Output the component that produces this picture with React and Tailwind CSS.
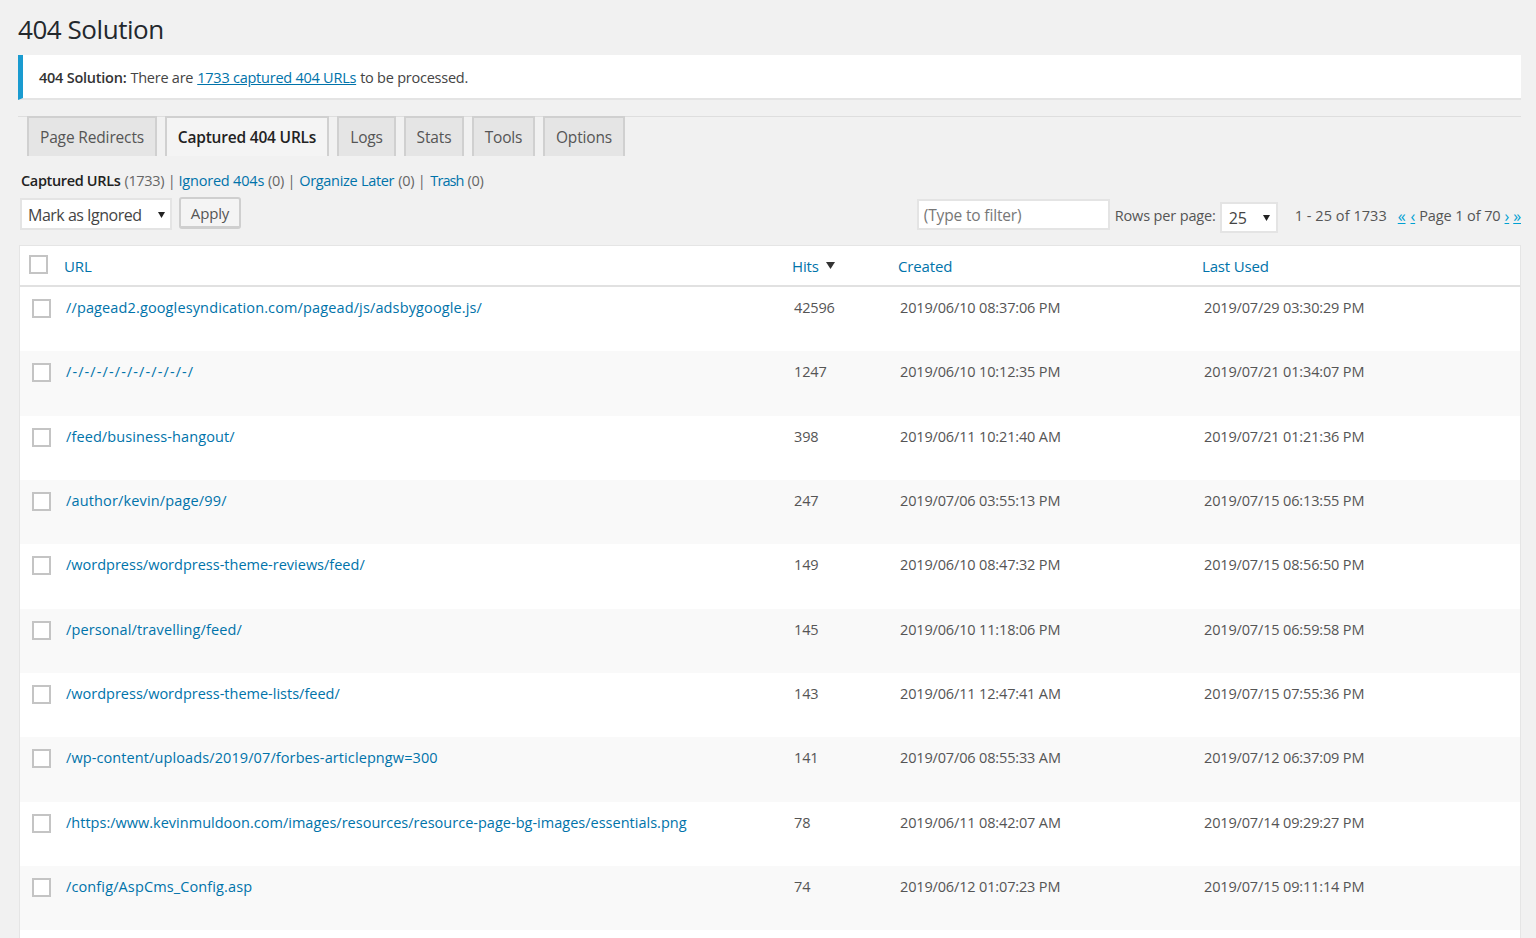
const tabs = [
  { label: "Page Redirects", width: "w-[130px]" },
  { label: "Captured 404 URLs", width: "w-[164px]" },
  { label: "Logs", width: "w-[59px]" },
  { label: "Stats", width: "w-[60px]" },
  { label: "Tools", width: "w-[63px]" },
  { label: "Options", width: "w-[82px]" },
];

const rows = [
  ["//pagead2.googlesyndication.com/pagead/js/adsbygoogle.js/", "42596", "2019/06/10 08:37:06 PM", "2019/07/29 03:30:29 PM", "tracking-[0.13px]"],
  ["/-/-/-/-/-/-/-/-/-/-/", "1247", "2019/06/10 10:12:35 PM", "2019/07/21 01:34:07 PM", "tracking-[1.1px]"],
  ["/feed/business-hangout/", "398", "2019/06/11 10:21:40 AM", "2019/07/21 01:21:36 PM", "tracking-[0.1px]"],
  ["/author/kevin/page/99/", "247", "2019/07/06 03:55:13 PM", "2019/07/15 06:13:55 PM", "tracking-[0.15px]"],
  ["/wordpress/wordpress-theme-reviews/feed/", "149", "2019/06/10 08:47:32 PM", "2019/07/15 08:56:50 PM", "tracking-[0px]"],
  ["/personal/travelling/feed/", "145", "2019/06/10 11:18:06 PM", "2019/07/15 06:59:58 PM", "tracking-[0.12px]"],
  ["/wordpress/wordpress-theme-lists/feed/", "143", "2019/06/11 12:47:41 AM", "2019/07/15 07:55:36 PM", "tracking-[0px]"],
  ["/wp-content/uploads/2019/07/forbes-articlepngw=300", "141", "2019/07/06 08:55:33 AM", "2019/07/12 06:37:09 PM", "tracking-[0.1px]"],
  ["/https:/www.kevinmuldoon.com/images/resources/resource-page-bg-images/essentials.png", "78", "2019/06/11 08:42:07 AM", "2019/07/14 09:29:27 PM", "tracking-[0.01px]"],
  ["/config/AspCms_Config.asp", "74", "2019/06/12 01:07:23 PM", "2019/07/15 09:11:14 PM", "tracking-[0.12px]"],
];

const gridCols = "grid grid-cols-[44px_728px_106px_304px_1fr]";

function Checkbox({ className }) {
  return <span className={"block w-[19px] h-[19px] bg-white border-2 border-[#c4c4c4] " + className} />;
}

function Caret() {
  return (
    <svg width="7" height="6" viewBox="0 0 7 6" className="shrink-0">
      <path d="M0 0h7L3.5 6z" fill="#222" />
    </svg>
  );
}

export default function App() {
  return (
    <div className="h-[938px] overflow-hidden bg-[#f1f1f1] pl-[18px] pr-[15px] font-['Open_Sans',sans-serif] text-[14px] tracking-[-0.15px] text-[#555]">
      <h1 className="h-[55px] pt-[10px] text-[26px] leading-[38px] tracking-[-0.45px] text-[#23282d]">404 Solution</h1>

      {/* Notice */}
      <div className="h-[45px] flex items-center bg-white border-l-[5px] border-[#1a9bd0] border-b-2 border-b-[#e4e4e4] pl-[16px] pt-[3px] text-[14.5px] tracking-[-0.24px] text-[#444]">
        <strong className="font-semibold text-[#333]">404 Solution:</strong>
        <span className="ml-1">There are</span>
        <a className="ml-1 text-[#0073aa] underline">1733 captured 404 URLs</a>
        <span className="ml-1">to be processed.</span>
      </div>

      {/* Tabs */}
      <div className="mt-4 h-[40px] flex shadow-[inset_0_1px_0_#dedede] pl-[9px] gap-[8px]">
        {tabs.map((t, i) => (
          <div
            key={t.label}
            className={
              t.width +
              " h-[40px] pt-[1px] flex items-center justify-center border-2 border-b-0 border-[#d0d0d0] text-[15.5px] " +
              (i === 1 ? "bg-[#f4f4f4] font-semibold text-[#222] tracking-[-0.2px]" : "bg-[#e5e5e5] font-medium text-[#555]")
            }
          >
            {t.label}
          </div>
        ))}
      </div>

      {/* Status links */}
      <div className="mt-[15px] ml-[3px] h-[20px] flex items-center text-[14.5px] leading-[20px] tracking-[-0.3px]">
        <strong className="font-semibold text-[#222] tracking-[-0.35px]">Captured URLs</strong>
        <span className="ml-1 text-[#666]">(1733) |</span>
        <a className="ml-[3px] text-[#0073aa] tracking-[-0.2px]">Ignored 404s</a>
        <span className="ml-1 text-[#666]">(0) |</span>
        <a className="ml-[4px] text-[#0073aa]">Organize Later</a>
        <span className="ml-1 text-[#666]">(0) |</span>
        <a className="ml-[5px] text-[#0073aa] tracking-[-0.9px]">Trash</a>
        <span className="ml-1 text-[#666]">(0)</span>
      </div>

      {/* Toolbar */}
      <div className="mt-[6px] ml-[2px] h-[36px] flex items-start">
        <div className="mt-[1px] w-[152px] h-[32px] pt-[2px] bg-white border-2 border-[#e4e4e4] flex items-center justify-between pl-[6px] pr-[5px] text-[16px] tracking-[-0.5px] text-[#444]">
          Mark as Ignored
          <Caret />
        </div>
        <div className="ml-[7px] w-[62px] h-[32px] pt-[2px] bg-[#f4f4f4] border-2 border-[#cfcfcf] border-b-[3px] rounded-[3px] flex items-center justify-center text-[15px] text-[#555]">
          Apply
        </div>
        <div className="ml-auto flex items-start text-[14.5px] leading-[20px] text-[#555]">
          <div className="mt-[2px] w-[193px] h-[31px] bg-white border-2 border-[#e4e4e4] flex items-center pl-[5px] text-[15.5px] text-[#777]">
            (Type to filter)
          </div>
          <span className="mt-[9px] ml-[5px]">Rows per page:</span>
          <div className="mt-[5px] ml-[4px] w-[58px] h-[31px] bg-white border-2 border-[#e4e4e4] flex items-center justify-between pl-[7px] pr-[6px] text-[16px] text-[#444]">
            25
            <Caret />
          </div>
          <span className="mt-[9px] ml-[17px] tracking-[0.05px]">1 - 25 of 1733</span>
          <div className="mt-[9px] ml-[11px] flex">
            <a className="text-[16px] text-[#00a0d2] underline">«</a>
            <a className="ml-[5px] text-[16px] text-[#00a0d2] underline">‹</a>
            <span className="ml-[4px] tracking-[-0.1px]">Page 1 of 70</span>
            <a className="ml-[4px] text-[16px] text-[#00a0d2] underline">›</a>
            <a className="ml-[4px] text-[16px] text-[#00a0d2] underline">»</a>
          </div>
        </div>
      </div>

      {/* Table */}
      <div className="mt-[12px] ml-[1px] bg-white border border-[#e5e5e5]">
        <div className={gridCols + " h-[41px] pt-[2px] items-center border-b-2 border-[#e1e1e1] text-[15px] text-[#0073aa]"}>
          <Checkbox className="ml-[9px] -mt-[4px]" />
          <span>URL</span>
          <span className="flex items-center gap-[7px]">
            Hits
            <svg width="9" height="7" viewBox="0 0 9 7" className="-mt-[2px]">
              <path d="M0 0h9L4.5 7z" fill="#333" />
            </svg>
          </span>
          <span>Created</span>
          <span>Last Used</span>
        </div>
        {rows.map((r, i) => (
          <div key={r[0]} className={gridCols + " h-[64.33px] pt-[10px] leading-[22px] text-[14.5px] " + (i % 2 ? "bg-[#f9f9f9]" : "bg-white")}>
            <Checkbox className="ml-[12px] mt-[2px]" />
            <a className={"pl-[2px] text-[#0073aa] font-medium " + r[4]}>{r[0]}</a>
            <span className="pl-[2px]">{r[1]}</span>
            <span className="pl-[2px]">{r[2]}</span>
            <span className="pl-[2px]">{r[3]}</span>
          </div>
        ))}
        <div className="h-[64.33px] bg-white" />
      </div>
    </div>
  );
}
